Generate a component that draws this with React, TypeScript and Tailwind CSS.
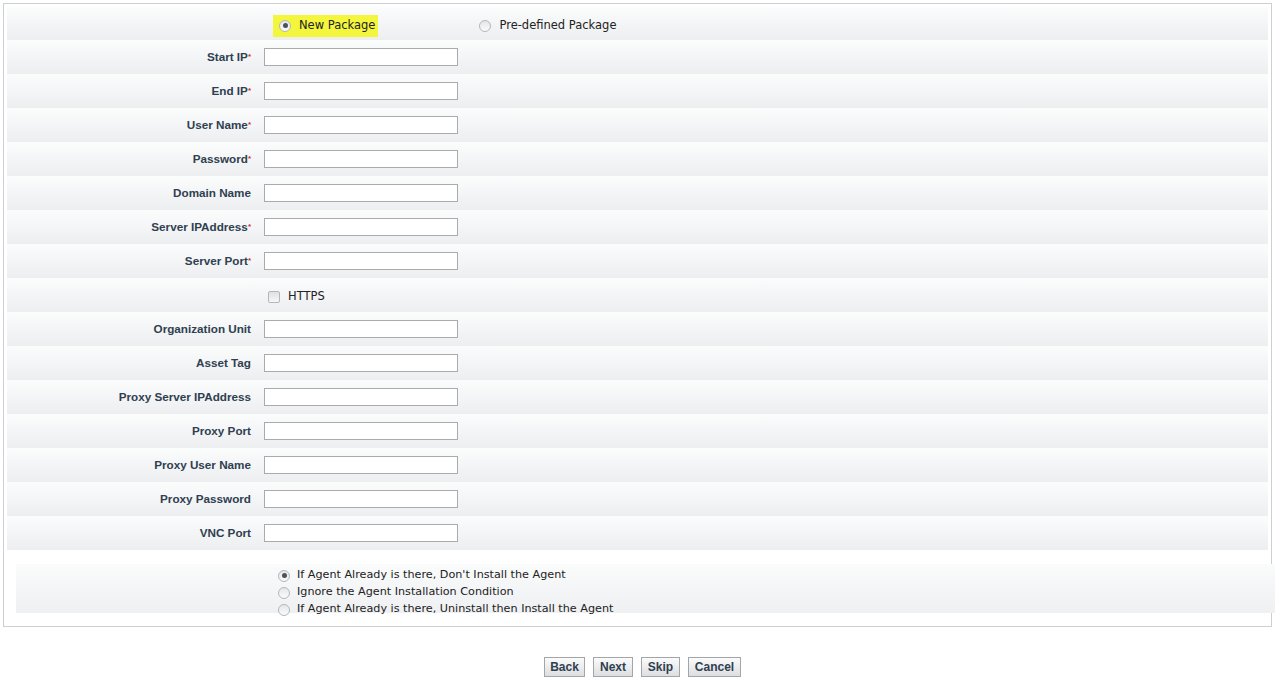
const fields: { label: string; required?: boolean }[] = [
  { label: 'Start IP', required: true },
  { label: 'End IP', required: true },
  { label: 'User Name', required: true },
  { label: 'Password', required: true },
  { label: 'Domain Name' },
  { label: 'Server IPAddress', required: true },
  { label: 'Server Port', required: true },
]

const moreFields = [
  'Organization Unit',
  'Asset Tag',
  'Proxy Server IPAddress',
  'Proxy Port',
  'Proxy User Name',
  'Proxy Password',
  'VNC Port',
]

const agentOptions = [
  "If Agent Already is there, Don't Install the Agent",
  'Ignore the Agent Installation Condition',
  'If Agent Already is there, Uninstall then Install the Agent',
]

const buttons = [
  { label: 'Back', w: 'w-[41px]' },
  { label: 'Next', w: 'w-[40px]' },
  { label: 'Skip', w: 'w-[39px]' },
  { label: 'Cancel', w: 'w-[53px]' },
]

function Radio({ checked }: { checked?: boolean }) {
  return (
    <span className="flex h-[12px] w-[12px] shrink-0 items-center justify-center rounded-full border border-[#b4b7ba] bg-gradient-to-b from-[#e4e6e8] to-[#fbfbfb]">
      {checked && <span className="h-[5px] w-[5px] rounded-full bg-[#4d5257]" />}
    </span>
  )
}

function Row({ children, first }: { children: React.ReactNode; first?: boolean }) {
  return (
    <div
      className={
        first
          ? 'flex h-[33px] items-center bg-gradient-to-b from-[#fbfcfc] via-[#f4f5f6] to-[#eceef0] pt-[4px]'
          : 'flex h-[34px] items-center bg-gradient-to-b from-[#fbfcfc] via-[#f4f5f6] to-[#eceef0]'
      }
    >
      {children}
    </div>
  )
}

function FieldRow({ label, required }: { label: string; required?: boolean }) {
  return (
    <Row>
      <div className="w-[244px] text-right font-['Liberation_Sans',Arial,sans-serif] text-[11.7px] font-bold text-[#2f4050]">
        {label}
        {required && <span className="relative -top-[2px] text-[8px] text-[#d0302b]">*</span>}
      </div>
      <input
        type="text"
        className="ml-[13px] h-[18px] w-[194px] border border-[#a9abad] bg-white outline-none"
      />
    </Row>
  )
}

export default function App() {
  return (
    <div className="min-h-[685px] bg-white pl-[3px] pt-[3px]">
      <div className="w-[1269px] border border-[#cdcfd1] px-[3px] pt-[3px] pb-[13px]">
        <Row first>
          <div className="ml-[266px] flex h-[22px] items-center bg-[#f4f53d] pl-[6px] pr-[3px] font-['DejaVu_Sans',Verdana,sans-serif] text-[11.5px] text-[#222]">
            <Radio checked />
            <span className="ml-[8px]">New Package</span>
          </div>
          <div className="ml-[101px] flex items-center font-['DejaVu_Sans',Verdana,sans-serif] text-[11.5px] text-[#222]">
            <Radio />
            <span className="ml-[8px]">Pre-defined Package</span>
          </div>
        </Row>
        {fields.map((f) => (
          <FieldRow key={f.label} label={f.label} required={f.required} />
        ))}
        <Row>
          <div className="ml-[261px] flex items-center pt-[3px] font-['DejaVu_Sans',Verdana,sans-serif] text-[11.5px] text-[#222]">
            <span className="h-[12px] w-[12px] rounded-[2px] border border-[#b4b7ba] bg-gradient-to-b from-[#dfe1e3] to-[#f7f7f7]" />
            <span className="ml-[8px]">HTTPS</span>
          </div>
        </Row>
        {moreFields.map((l) => (
          <FieldRow key={l} label={l} />
        ))}
        <div className="-mr-[8px] ml-[9px] mt-[14px] h-[49px] bg-gradient-to-b from-[#fafbfb] to-[#eef0f2] pl-[262px] pt-[3px]">
          {agentOptions.map((o, i) => (
            <div
              key={o}
              className="flex h-[17px] shrink-0 items-center font-['DejaVu_Sans',Verdana,sans-serif] text-[11.2px] text-[#222]"
            >
              <Radio checked={i === 0} />
              <span className="ml-[7px]">{o}</span>
            </div>
          ))}
        </div>
      </div>
      <div className="mt-[30px] flex justify-center gap-[8px] pl-[7px]">
        {buttons.map((b) => (
          <button
            key={b.label}
            className={`${b.w} h-[20px] border border-[#a3a6a9] bg-gradient-to-b from-[#fbfbfb] to-[#dcdee0] text-center font-['Liberation_Sans',Arial,sans-serif] text-[12px] font-bold text-[#2f4050]`}
          >
            {b.label}
          </button>
        ))}
      </div>
    </div>
  )
}
